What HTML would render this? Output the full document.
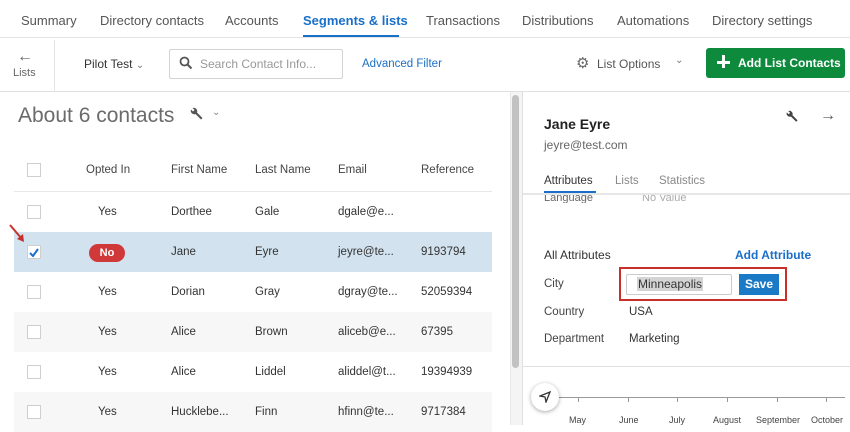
<!DOCTYPE html>
<html><head><style>
*{margin:0;padding:0;box-sizing:border-box}
body{width:850px;height:425px;overflow:hidden;background:#fff;font-family:"Liberation Sans",sans-serif;color:#333;position:relative;font-size:12px}
.a{position:absolute;white-space:nowrap}
.tab{position:absolute;top:13px;font-size:13px;color:#555}
.cb{position:absolute;width:14px;height:14px;border:1px solid #cfcfcf;background:#fff}
.row{position:absolute;left:14px;width:478px;height:40px}
.row span{position:absolute;top:14px;font-size:11.5px;color:#333}
</style></head><body>
<div class="tab" style="left:21px">Summary</div>
<div class="tab" style="left:100px">Directory contacts</div>
<div class="tab" style="left:225px">Accounts</div>
<div class="tab" style="left:303px;color:#1a6fc9;font-weight:bold">Segments &amp; lists</div>
<div class="tab" style="left:426px">Transactions</div>
<div class="tab" style="left:522px">Distributions</div>
<div class="tab" style="left:617px">Automations</div>
<div class="tab" style="left:712px">Directory settings</div>
<div class="a" style="left:303px;top:35px;width:96px;height:2px;background:#1a6fc9"></div>
<div class="a" style="left:0;top:37px;width:850px;height:1px;background:#e4e4e4"></div>
<div class="a" style="left:17px;top:48px;font-size:16px;color:#666">&#8592;</div>
<div class="a" style="left:13px;top:67px;font-size:11px;color:#666">Lists</div>
<div class="a" style="left:54px;top:40px;width:1px;height:51px;background:#e4e4e4"></div>
<div class="a" style="left:84px;top:57px;font-size:12px;color:#333">Pilot Test <span style="color:#777;font-size:10px">&#8964;</span></div>
<div class="a" style="left:169px;top:49px;width:174px;height:30px;border:1px solid #d4d4d4;border-radius:2px"></div>
<svg class="a" style="left:179px;top:56px" width="14" height="14" viewBox="0 0 14 14"><circle cx="5.5" cy="5.5" r="4" fill="none" stroke="#555" stroke-width="1.8"/><path d="M8.5 8.5l4 4" stroke="#555" stroke-width="2"/></svg>
<div class="a" style="left:200px;top:57px;font-size:12px;color:#999">Search Contact Info...</div>
<div class="a" style="left:362px;top:58px;font-size:11.5px;color:#1a6fc9">Advanced Filter</div>
<div class="a" style="left:576px;top:54px;font-size:15px;color:#666">&#9881;</div>
<div class="a" style="left:597px;top:57px;font-size:12px;color:#555">List Options</div>
<div class="a" style="left:675px;top:55px;font-size:10px;color:#777">&#8964;</div>
<div class="a" style="left:706px;top:48px;width:139px;height:30px;background:#0e8a3d;border-radius:3px"></div>
<div class="a" style="left:717px;top:56px;width:13px;height:3px;background:#fff;top:61px"></div>
<div class="a" style="left:722px;top:55px;width:3px;height:13px;background:#fff"></div>
<div class="a" style="left:738px;top:56px;font-size:12px;color:#fff;font-weight:bold">Add List Contacts</div>
<div class="a" style="left:0;top:91px;width:850px;height:1px;background:#e0e0e0"></div>
<div class="a" style="left:18px;top:104px;font-size:21px;color:#6b6b6b">About 6 contacts</div>
<svg class="a" style="left:188px;top:107px" width="16" height="16" viewBox="0 0 16 16"><path d="M3 2.5A3.5 3.5 0 0 0 7.5 7L13 12.5L14.5 11L9 5.5A3.5 3.5 0 0 0 4.5 1L6.5 3L5 4.5Z" fill="#555"/></svg>
<div class="a" style="left:212px;top:107px;font-size:10px;color:#888">&#8964;</div>
<div class="cb" style="left:27px;top:163px"></div>
<div class="a" style="left:86px;top:164px;font-size:11.5px;color:#444">Opted In</div>
<div class="a" style="left:171px;top:164px;font-size:11.5px;color:#444">First Name</div>
<div class="a" style="left:255px;top:164px;font-size:11.5px;color:#444">Last Name</div>
<div class="a" style="left:338px;top:164px;font-size:11.5px;color:#444">Email</div>
<div class="a" style="left:421px;top:164px;font-size:11.5px;color:#444">Reference</div>
<div class="a" style="left:14px;top:191px;width:478px;height:1px;background:#e8e8e8"></div>
<div class="row" style="top:192px"><span style="left:84px">Yes</span><span style="left:157px">Dorthee</span><span style="left:241px">Gale</span><span style="left:324px">dgale@e...</span></div>
<div class="cb" style="left:27px;top:205px"></div>
<div class="row" style="top:232px;background:#d2e2ef"><span style="left:157px">Jane</span><span style="left:241px">Eyre</span><span style="left:324px">jeyre@te...</span><span style="left:407px">9193794</span></div>
<div class="a" style="left:89px;top:244px;width:36px;height:18px;border-radius:9px;background:#d0393a;color:#fff;font-weight:bold;font-size:11px;text-align:center;line-height:18px">No</div>
<div class="cb" style="left:27px;top:245px"></div>
<svg class="a" style="left:29px;top:248px" width="10" height="9"><path d="M1 5L4 8L9 1" fill="none" stroke="#1a6fc9" stroke-width="2"/></svg>
<svg class="a" style="left:9px;top:224px" width="18" height="20"><path d="M1 1L13 15" stroke="#c9302c" stroke-width="2"/><path d="M15 18L8 15L14 10Z" fill="#c9302c"/></svg>
<div class="row" style="top:272px"><span style="left:84px">Yes</span><span style="left:157px">Dorian</span><span style="left:241px">Gray</span><span style="left:324px">dgray@te...</span><span style="left:407px">52059394</span></div>
<div class="cb" style="left:27px;top:285px"></div>
<div class="row" style="top:312px;background:#f7f7f7"><span style="left:84px">Yes</span><span style="left:157px">Alice</span><span style="left:241px">Brown</span><span style="left:324px">aliceb@e...</span><span style="left:407px">67395</span></div>
<div class="cb" style="left:27px;top:325px"></div>
<div class="row" style="top:352px"><span style="left:84px">Yes</span><span style="left:157px">Alice</span><span style="left:241px">Liddel</span><span style="left:324px">aliddel@t...</span><span style="left:407px">19394939</span></div>
<div class="cb" style="left:27px;top:365px"></div>
<div class="row" style="top:392px;background:#f7f7f7"><span style="left:84px">Yes</span><span style="left:157px">Hucklebe...</span><span style="left:241px">Finn</span><span style="left:324px">hfinn@te...</span><span style="left:407px">9717384</span></div>
<div class="cb" style="left:27px;top:405px"></div>
<div class="a" style="left:510px;top:92px;width:12px;height:333px;background:#f4f4f4;border-left:1px solid #e8e8e8"></div>
<div class="a" style="left:512px;top:95px;width:7px;height:273px;background:#c2c2c2;border-radius:4px"></div>
<div class="a" style="left:522px;top:92px;width:1px;height:333px;background:#e0e0e0"></div>
<div class="a" style="left:544px;top:116px;font-size:14px;color:#222;font-weight:bold">Jane Eyre</div>
<div class="a" style="left:544px;top:138px;font-size:12px;color:#666">jeyre@test.com</div>
<svg class="a" style="left:784px;top:110px" width="15" height="15" viewBox="0 0 16 16"><path d="M3 2.5A3.5 3.5 0 0 0 7.5 7L13 12.5L14.5 11L9 5.5A3.5 3.5 0 0 0 4.5 1L6.5 3L5 4.5Z" fill="#444"/></svg>
<div class="a" style="left:820px;top:107px;font-size:16px;color:#555">&#8594;</div>
<div class="a" style="left:544px;top:175px;font-size:11.5px;color:#333">Attributes</div>
<div class="a" style="left:615px;top:175px;font-size:11.5px;color:#888">Lists</div>
<div class="a" style="left:659px;top:175px;font-size:11.5px;color:#888">Statistics</div>
<div class="a" style="left:544px;top:191px;width:52px;height:2px;background:#1a6fc9"></div>
<div class="a" style="left:523px;top:193px;width:327px;height:2px;background:#e6e6e6"></div>
<div class="a" style="left:544px;top:195px;font-size:11px;color:#666;height:8px;overflow:hidden;line-height:6px">Language</div>
<div class="a" style="left:642px;top:195px;font-size:11px;color:#aaa;height:8px;overflow:hidden;line-height:6px">No Value</div>
<div class="a" style="left:544px;top:248px;font-size:12px;color:#333">All Attributes</div>
<div class="a" style="left:735px;top:248px;font-size:12px;color:#1a6fc9;font-weight:bold">Add Attribute</div>
<div class="a" style="left:544px;top:278px;font-size:11.5px;color:#444">City</div>
<div class="a" style="left:619px;top:267px;width:168px;height:34px;border:2px solid #c9302c"></div>
<div class="a" style="left:626px;top:274px;width:106px;height:21px;border:1px solid #ccc;border-radius:2px"></div>
<div class="a" style="left:637px;top:277px;font-size:12px;color:#333;background:#d4d4d4;padding:0 1px">Minneapolis</div>
<div class="a" style="left:739px;top:274px;width:40px;height:21px;background:#1a7ac5;color:#fff;font-weight:bold;font-size:12px;text-align:center;line-height:21px">Save</div>
<div class="a" style="left:544px;top:306px;font-size:11.5px;color:#444">Country</div>
<div class="a" style="left:629px;top:306px;font-size:11.5px;color:#333">USA</div>
<div class="a" style="left:544px;top:333px;font-size:11.5px;color:#444">Department</div>
<div class="a" style="left:629px;top:333px;font-size:11.5px;color:#333">Marketing</div>
<div class="a" style="left:523px;top:366px;width:327px;height:1px;background:#e0e0e0"></div>
<div class="a" style="left:555px;top:397px;width:290px;height:1px;background:#999"></div>
<div class="a" style="left:531px;top:383px;width:28px;height:28px;border-radius:14px;background:#fff;box-shadow:0 1px 4px rgba(0,0,0,.35)"></div>
<svg class="a" style="left:539px;top:391px" width="12" height="12"><path d="M1 5L11 1L7 11L6 6Z" fill="none" stroke="#333" stroke-width="1.3"/></svg>
<div class="a" style="left:578px;top:397px;width:1px;height:5px;background:#999"></div>
<div class="a" style="left:628px;top:397px;width:1px;height:5px;background:#999"></div>
<div class="a" style="left:677px;top:397px;width:1px;height:5px;background:#999"></div>
<div class="a" style="left:727px;top:397px;width:1px;height:5px;background:#999"></div>
<div class="a" style="left:777px;top:397px;width:1px;height:5px;background:#999"></div>
<div class="a" style="left:826px;top:397px;width:1px;height:5px;background:#999"></div>
<div class="a" style="left:569px;top:415px;font-size:9px;color:#444">May</div>
<div class="a" style="left:619px;top:415px;font-size:9px;color:#444">June</div>
<div class="a" style="left:669px;top:415px;font-size:9px;color:#444">July</div>
<div class="a" style="left:713px;top:415px;font-size:9px;color:#444">August</div>
<div class="a" style="left:756px;top:415px;font-size:9px;color:#444">September</div>
<div class="a" style="left:811px;top:415px;font-size:9px;color:#444">October</div>
</body></html>
